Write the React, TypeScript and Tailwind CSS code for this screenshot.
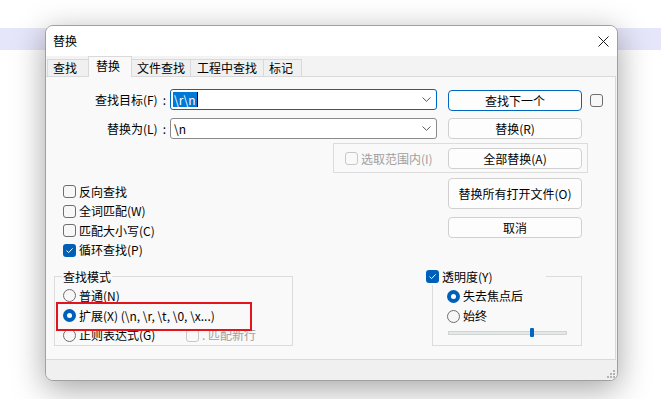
import React from "react";

const F = "font-['Noto_Sans_CJK_SC','Noto_Sans',sans-serif]";

function Check({ checked = false, disabled = false }: { checked?: boolean; disabled?: boolean }) {
  if (checked) {
    return (
      <div className="w-[13px] h-[13px] rounded-[3px] bg-[#005fb8] flex items-center justify-center shrink-0">
        <svg width="9" height="7" viewBox="0 0 9 7">
          <path d="M1.5 3.6 L3.6 5.6 L7.6 1.4" fill="none" stroke="#ffffff" strokeWidth="1" />
        </svg>
      </div>
    );
  }
  return (
    <div
      className={`w-[13px] h-[13px] rounded-[3px] border shrink-0 ${
        disabled ? "border-[#c8c8c8] bg-[#f9f9f9]" : "border-[#6e6e6e] bg-[#f7f7f7]"
      }`}
    />
  );
}

function Radio({ on = false }: { on?: boolean }) {
  if (on) {
    return (
      <div className="w-[13px] h-[13px] rounded-full bg-[#005fb8] flex items-center justify-center shrink-0">
        <div className="w-[5px] h-[5px] rounded-full bg-white" />
      </div>
    );
  }
  return <div className="w-[13px] h-[13px] rounded-full border border-[#6e6e6e] bg-[#f7f7f7] shrink-0" />;
}

function Btn({ children, h = "h-[21px]", primary = false }: { children: React.ReactNode; h?: string; primary?: boolean }) {
  return (
    <div
      className={`w-[134px] ${h} flex items-center justify-center rounded-[4px] border bg-[#fdfdfd] ${
        primary ? "border-[#0067c0]" : "border-[#d0d0d0]"
      }`}
    >
      {children}
    </div>
  );
}

function Chevron() {
  return (
    <svg width="9" height="5" viewBox="0 0 9 5">
      <path d="M0.5 0.5 L4.5 4.3 L8.5 0.5" fill="none" stroke="#5a5a5a" strokeWidth="1" />
    </svg>
  );
}

export default function App() {
  return (
    <div className={`relative w-[661px] h-[399px] bg-white overflow-hidden ${F} text-[12px] leading-[16px] text-black`}>
      <div className="mt-[28px] h-[22px] bg-[#e6e6fa]" />

      <div className="absolute left-[45px] top-[25px] w-[573px] h-[356px] rounded-[8px] border border-[#a0a0a0] bg-[#f3f3f3] shadow-[0_8px_32px_rgba(0,0,0,0.36)] overflow-hidden flex flex-col">
        {/* title bar */}
        <div className="h-[30px] bg-white flex items-center justify-between pl-[7px] pr-[8px] shrink-0">
          <span className="text-[12px]">替换</span>
          <svg width="11" height="11" viewBox="0 0 11 11">
            <path d="M0.5 0.5 L10.5 10.5 M10.5 0.5 L0.5 10.5" stroke="#1a1a1a" strokeWidth="1" />
          </svg>
        </div>

        {/* tabs */}
        <div className="relative z-10 h-[21px] -mb-[1px] flex items-end pl-[1px] shrink-0">
          <div className="w-[41px] h-[17px] mb-[1px] border-t border-l border-[#d9d9d9] bg-[#f0f0f0] flex items-center pl-[5px]">查找</div>
          <div className="w-[44px] h-[21px] border-t border-l border-r border-[#d9d9d9] bg-[#f9f9f9] flex items-center pl-[7px] pb-[2px]">替换</div>
          <div className="w-[58px] h-[17px] mb-[1px] border-t border-[#d9d9d9] bg-[#f0f0f0] flex items-center pl-[5px]">文件查找</div>
          <div className="w-[73px] h-[17px] mb-[1px] border-t border-l border-[#d9d9d9] bg-[#f0f0f0] flex items-center pl-[6px]">工程中查找</div>
          <div className="w-[39px] h-[17px] mb-[1px] border-t border-l border-r border-[#d9d9d9] bg-[#f0f0f0] flex items-center pl-[5px]">标记</div>
        </div>

        {/* panel */}
        <div className="w-[570px] h-[284px] shrink-0 bg-[#f9f9f9] border-t border-r border-b border-[#d9d9d9] flex flex-col">
          {/* row 1 */}
          <div className="mt-[12px] h-[21px] flex items-center">
            <div className="w-[124px] flex justify-end pr-[4px]">
              <span>查找目标(F)</span>
              <span className="ml-[5px]">:</span>
            </div>
            <div className="w-[267px] h-[21px] rounded-[3px] border border-[#0067c0] bg-white flex items-center justify-between pl-[2px] pr-[5px]">
              <div className="flex items-center">
                <span className="bg-[#0078d7] text-white leading-[15px] px-[1px]">\r\n</span>
                <span className="w-[1px] h-[15px] bg-black" />
              </div>
              <Chevron />
            </div>
            <div className="ml-[11px] mt-[2px]">
              <Btn primary>查找下一个</Btn>
            </div>
            <div className="ml-[8px] mt-[2px]">
              <Check />
            </div>
          </div>

          {/* row 2 */}
          <div className="mt-[8px] h-[21px] flex items-center">
            <div className="w-[124px] flex justify-end pr-[4px]">
              <span>替换为(L)</span>
              <span className="ml-[5px]">:</span>
            </div>
            <div className="w-[267px] h-[21px] rounded-[3px] border border-[#8a8a8a] bg-white flex items-center justify-between pl-[2px] pr-[5px]">
              <span className="pl-[1px]">\n</span>
              <Chevron />
            </div>
            <div className="ml-[11px]">
              <Btn>替换(R)</Btn>
            </div>
          </div>

          {/* selection group */}
          <div className="mt-[4px] ml-[287px] w-[255px] h-[30px] border border-[#dcdcdc] flex items-center pl-[11px]">
            <div className="flex items-center gap-[3px] mt-[1px]">
              <Check disabled />
              <span className="text-[#a0a0a0]">选取范围内(I)</span>
            </div>
            <div className="ml-auto mr-[5px] mt-[1px]">
              <Btn>全部替换(A)</Btn>
            </div>
          </div>

          {/* middle section */}
          <div className="flex">
            <div className="w-[402px] pl-[17px] pt-[9px] flex flex-col">
              <div className="h-[19.5px] flex items-center gap-[3px]">
                <Check />
                <span>反向查找</span>
              </div>
              <div className="h-[19.5px] flex items-center gap-[3px]">
                <Check />
                <span>全词匹配(W)</span>
              </div>
              <div className="h-[19.5px] flex items-center gap-[3px]">
                <Check />
                <span>匹配大小写(C)</span>
              </div>
              <div className="h-[19.5px] flex items-center gap-[3px]">
                <Check checked />
                <span>循环查找(P)</span>
              </div>
            </div>
            <div className="pt-[5px] flex flex-col gap-[8px]">
              <Btn h="h-[31px]">替换所有打开文件(O)</Btn>
              <Btn>取消</Btn>
            </div>
          </div>

          {/* bottom groups */}
          <div className="mt-[16px] flex items-start">
            <div className="relative ml-[8px] w-[239px] h-[70px] border border-[#dcdcdc] pl-[8px] pt-[9px] flex flex-col">
              <span className="absolute left-[7px] -top-[8px] bg-[#f9f9f9] px-[1px]">查找模式</span>
              <div className="h-[20px] flex items-center gap-[3px]">
                <Radio />
                <span>普通(N)</span>
              </div>
              <div className="h-[20px] flex items-center gap-[3px]">
                <Radio on />
                <span>扩展(X) (\n, \r, \t, \0, \x...)</span>
              </div>
              <div className="h-[20px] flex items-center">
                <div className="w-[123px] flex items-center gap-[3px]">
                  <Radio />
                  <span>正则表达式(G)</span>
                </div>
                <div className="flex items-center gap-[3px]">
                  <Check disabled />
                  <span className="text-[#a0a0a0]">. 匹配新行</span>
                </div>
              </div>
              <div className="absolute left-[1px] top-[25px] w-[196px] h-[29px] border-2 border-[#e3141c]" />
            </div>

            <div className="relative ml-[139px] w-[150px] h-[70px] border border-[#dcdcdc] pl-[14px] pt-[9px] flex flex-col">
              <div className="absolute -left-[7px] -top-[9px] w-[120px] h-[17px] bg-[#f9f9f9] flex items-center gap-[3px]">
                <Check checked />
                <span>透明度(Y)</span>
              </div>
              <div className="h-[20px] flex items-center gap-[3px]">
                <Radio on />
                <span>失去焦点后</span>
              </div>
              <div className="h-[20px] flex items-center gap-[3px]">
                <Radio />
                <span>始终</span>
              </div>
              <div className="relative ml-[1px] mt-[5px] w-[119px] h-[4px] bg-[#e6e8e8] border border-[#d0d4d4]">
                <div className="absolute left-[81px] -top-[4px] w-[4px] h-[9px] bg-[#0067c0] rounded-[1px]" />
              </div>
            </div>
          </div>
        </div>

        {/* bottom bar */}
        <div className="h-[20px] bg-[#f0f0f0] flex justify-end items-end pr-[1px] pb-[1px] shrink-0">
          <svg width="9" height="9" viewBox="0 0 9 9">
            <rect x="6" y="0" width="2" height="2" fill="#b4b4b4" />
            <rect x="3" y="3" width="2" height="2" fill="#b4b4b4" />
            <rect x="6" y="3" width="2" height="2" fill="#b4b4b4" />
            <rect x="0" y="6" width="2" height="2" fill="#b4b4b4" />
            <rect x="3" y="6" width="2" height="2" fill="#b4b4b4" />
            <rect x="6" y="6" width="2" height="2" fill="#b4b4b4" />
          </svg>
        </div>
      </div>
    </div>
  );
}
